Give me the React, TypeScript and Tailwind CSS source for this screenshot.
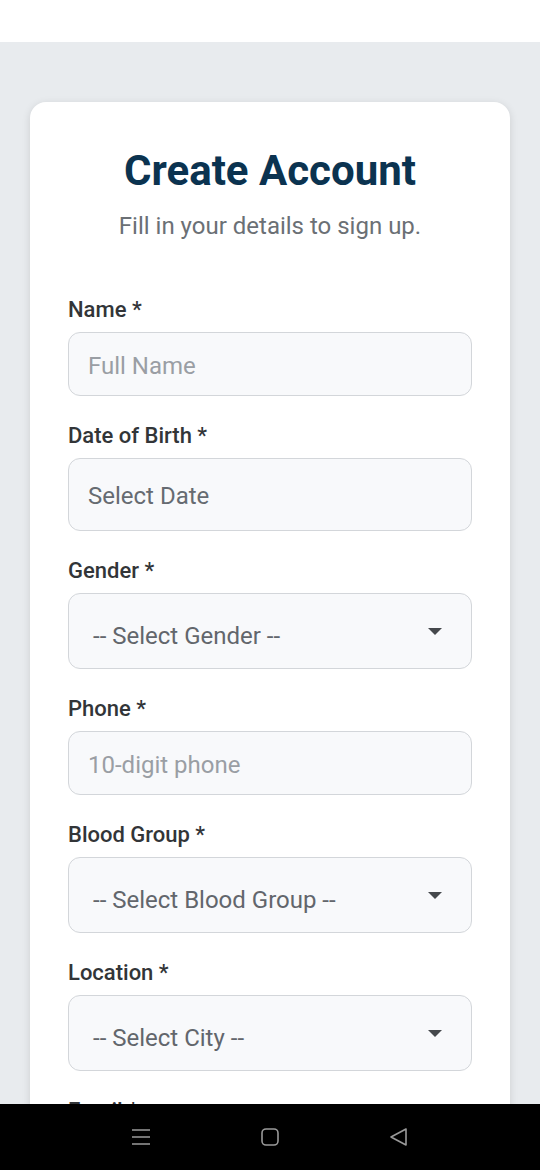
import React from "react";

const font = { fontFamily: "Roboto, 'Noto Sans', Arial, sans-serif" };

function Label({ text }: { text: string }) {
  return (
    <div className="text-[22px] leading-[24px] font-medium text-[#323538] mb-[10px]">
      {text}
    </div>
  );
}

function Caret() {
  return (
    <svg width="16" height="9" viewBox="0 0 16 9" className="shrink-0">
      <path d="M1 1 L15 1 L8 8 Z" fill="#45484c" />
    </svg>
  );
}

function TextField({ label, placeholder, h, dark }: { label: string; placeholder: string; h: string; dark?: boolean }) {
  return (
    <div className="mb-[28px]">
      <Label text={label} />
      <div
        className={`${h} w-full rounded-[12px] border border-[#d3d6da] bg-[#f8f9fb] flex items-center px-[19px] pt-[3px] text-[24px] ${
          dark ? "text-[#666b71]" : "text-[#9a9ea4]"
        }`}
      >
        {placeholder}
      </div>
    </div>
  );
}

function SelectField({ label, placeholder }: { label: string; placeholder: string }) {
  return (
    <div className="mb-[28px]">
      <Label text={label} />
      <div className="h-[76px] w-full rounded-[12px] border border-[#d3d6da] bg-[#f8f9fb] flex items-center justify-between pl-[24px] pr-[28px] text-[24px] text-[#62666c]">
        <span className="pt-[10px]">{placeholder}</span>
        <Caret />
      </div>
    </div>
  );
}

export default function App() {
  return (
    <div style={font} className="min-h-screen bg-[#e8ebee]">
      <div className="h-[42px] bg-white" />
      <div className="pt-[60px] px-[30px]">
        <div className="bg-white rounded-[16px] shadow-[0_2px_8px_rgba(0,0,0,0.12)] px-[38px] pt-[45px] pb-[40px]">
          <h1 className="text-center text-[42px] leading-[48px] font-bold text-[#0b3350]">
            Create Account
          </h1>
          <p className="text-center text-[24px] leading-[30px] text-[#6b7075] mt-[16px]">
            Fill in your details to sign up.
          </p>
          <div className="mt-[57px]">
            <TextField label="Name *" placeholder="Full Name" h="h-[64px]" />
            <TextField label="Date of Birth *" placeholder="Select Date" h="h-[73px]" dark />
            <SelectField label="Gender *" placeholder="-- Select Gender --" />
            <TextField label="Phone *" placeholder="10-digit phone" h="h-[64px]" />
            <SelectField label="Blood Group *" placeholder="-- Select Blood Group --" />
            <SelectField label="Location *" placeholder="-- Select City --" />
            <TextField label="Email *" placeholder="you@example.com" h="h-[64px]" />
            <TextField label="Password *" placeholder="Password" h="h-[64px]" />
          </div>
        </div>
      </div>
      <div className="fixed bottom-0 left-0 right-0 h-[66px] bg-black flex items-center justify-center gap-[109px]">
        <svg width="20" height="20" viewBox="0 0 20 20">
          <path d="M1 3 H19 M1 10 H19 M1 17 H19" stroke="#9a9a9a" strokeWidth="1.6" fill="none" />
        </svg>
        <svg width="20" height="20" viewBox="0 0 20 20">
          <rect x="2" y="2" width="16" height="16" rx="4" stroke="#9a9a9a" strokeWidth="1.6" fill="none" />
        </svg>
        <svg width="20" height="20" viewBox="0 0 20 20">
          <path d="M17 2 L17 18 L2 10 Z" stroke="#9a9a9a" strokeWidth="1.6" strokeLinejoin="round" fill="none" />
        </svg>
      </div>
    </div>
  );
}
